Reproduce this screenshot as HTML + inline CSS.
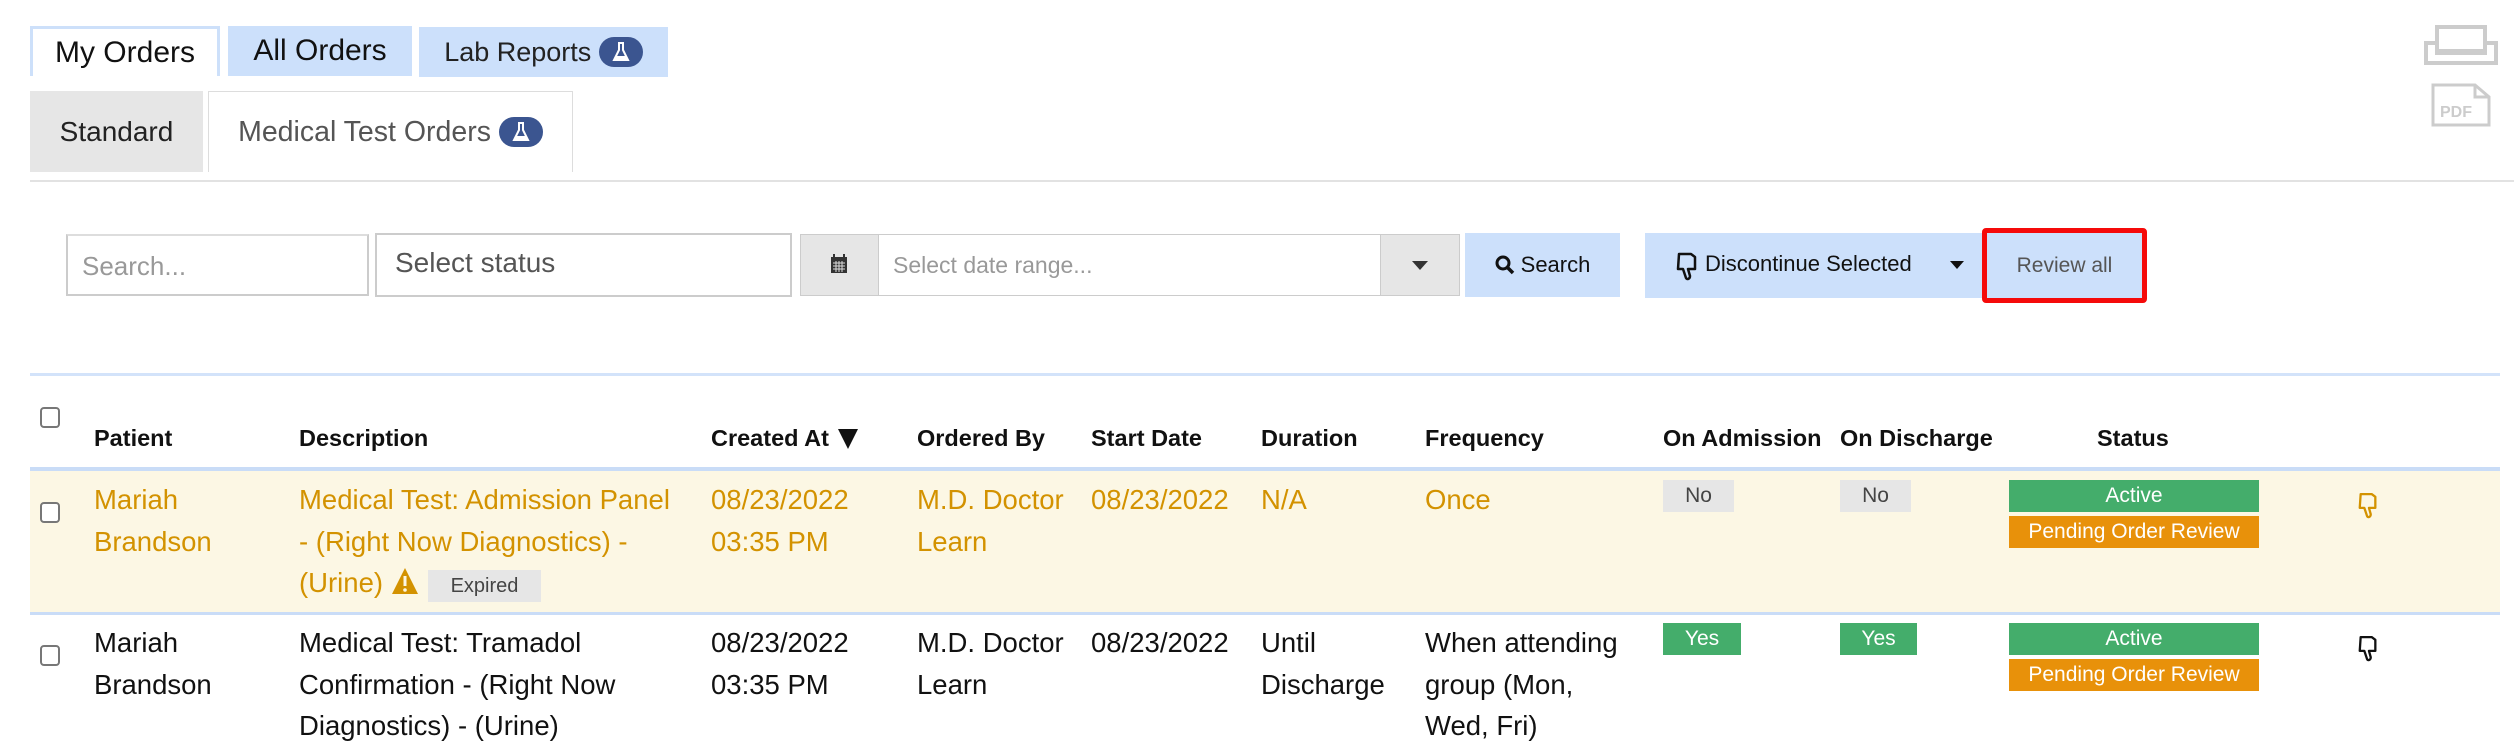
<!DOCTYPE html>
<html><head><meta charset="utf-8"><style>
*{box-sizing:border-box;margin:0;padding:0}
body{width:2514px;height:746px;background:#fff;font-family:"Liberation Sans",Arial,sans-serif;position:relative;overflow:hidden;color:#111}
.a{position:absolute}
.tab{position:absolute;display:flex;align-items:center;justify-content:center}
.badge{display:inline-block;width:44px;height:30px;border-radius:15px;background:#3b5590;vertical-align:middle;position:relative}
.badge svg{position:absolute;left:12px;top:4px}
.hd{position:absolute;top:423px;font-weight:bold;font-size:23.5px;line-height:30px;color:#111}
.c{position:absolute;font-size:27.5px;line-height:41.5px;white-space:nowrap}
.o{color:#d39200}
.cb{position:absolute;width:20px;height:21px;border:2px solid #777;border-radius:4px;background:#fff}
.lbl{position:absolute;display:flex;align-items:center;justify-content:center;font-size:21px;height:32px}
.g{background:#44ad6b;color:#fff}
.or{background:#e8910a;color:#fff}
.gr{background:#e6e6e6;color:#444}
</style></head><body>

<div class="tab" style="left:30px;top:26px;width:190px;height:50px;border:3px solid #cde0fa;border-bottom:none;font-size:30px">My Orders</div>
<div class="tab" style="left:228px;top:26px;width:184px;height:50px;background:#cce0fb;font-size:30px">All Orders</div>
<div class="tab" style="left:419px;top:27px;width:249px;height:50px;background:#cce0fb;font-size:27px;color:#222">Lab Reports&nbsp;<span class="badge"><svg width="20" height="22" viewBox="0 0 20 22"><path d="M7 2h6M8 2v7L3 19h14L12 9V2" fill="none" stroke="#fff" stroke-width="2"/><path d="M5 15h10l2 4H3z" fill="#fff"/></svg></span></div>

<div class="tab" style="left:30px;top:91px;width:173px;height:81px;background:#e6e6e6;font-size:28px;color:#222">Standard</div>
<div class="tab" style="left:208px;top:91px;width:365px;height:81px;border:1px solid #ddd;border-bottom:none;font-size:28.5px;color:#555">Medical Test Orders&nbsp;<span class="badge"><svg width="20" height="22" viewBox="0 0 20 22"><path d="M7 2h6M8 2v7L3 19h14L12 9V2" fill="none" stroke="#fff" stroke-width="2"/><path d="M5 15h10l2 4H3z" fill="#fff"/></svg></span></div>
<div class="a" style="left:30px;top:180px;width:2484px;height:2px;background:#e2e2e2"></div>

<svg class="a" style="left:2424px;top:25px" width="74" height="40" viewBox="0 0 74 40"><rect x="13" y="2" width="48" height="24" fill="none" stroke="#ccc" stroke-width="4"/><path d="M2 18h11v10h48V18h11v20H2z" fill="none" stroke="#ccc" stroke-width="4"/></svg>
<svg class="a" style="left:2431px;top:83px" width="60" height="44" viewBox="0 0 60 44"><path d="M2 2h42l14 12v28H2z M44 2v12h14" fill="none" stroke="#ccc" stroke-width="3"/><text x="9" y="34" font-family="Liberation Sans" font-weight="bold" font-size="16" fill="#ccc">PDF</text></svg>

<div class="a" style="left:66px;top:234px;width:303px;height:62px;border:2px solid #ccc;border-top-color:#ddd;font-size:26px;color:#999;padding:15px 14px">Search...</div>
<div class="a" style="left:375px;top:233px;width:417px;height:64px;border:2px solid #ccc;font-size:28px;color:#555;padding:12px 18px">Select status</div>
<div class="a" style="left:800px;top:234px;width:660px;height:62px;border:1px solid #ccc;background:#fff"></div>
<div class="a" style="left:801px;top:235px;width:78px;height:60px;background:#e6e6e6;border-right:1px solid #ccc"></div>
<svg class="a" style="left:830px;top:254px" width="18" height="20" viewBox="0 0 18 20"><rect x="1" y="3" width="16" height="16" fill="#333"/><path d="M4 0v5M14 0v5" stroke="#333" stroke-width="2"/><path d="M3 9h12M3 12h12M3 15h12M6 7v11M9 7v11M12 7v11" stroke="#ddd" stroke-width="1"/></svg>
<div class="a" style="left:893px;top:252px;font-size:23px;color:#999">Select date range...</div>
<div class="a" style="left:1380px;top:235px;width:79px;height:60px;background:#e6e6e6;border-left:1px solid #ccc"></div>
<div class="a" style="left:1412px;top:261px;border-left:8px solid transparent;border-right:8px solid transparent;border-top:9px solid #333"></div>
<div class="a" style="left:1465px;top:233px;width:155px;height:64px;background:#cce0fb;display:flex;align-items:center;justify-content:center;font-size:22px;color:#111">
<svg width="20" height="20" viewBox="0 0 20 20" style="margin-right:6px"><circle cx="8" cy="8" r="6" fill="none" stroke="#111" stroke-width="3"/><path d="M12 12l6 6" stroke="#111" stroke-width="3.5"/></svg>Search</div>

<div class="a" style="left:1645px;top:233px;width:337px;height:65px;background:#cce0fb"></div>
<svg class="a" style="left:1675px;top:252px" width="24" height="30" viewBox="0 0 24 30"><path d="M4 2h12l4 3v12h-7l2 7c0 3-3 4-4 2l-3-9H3z" fill="none" stroke="#111" stroke-width="2.5" stroke-linejoin="round"/></svg>
<div class="a" style="left:1705px;top:251px;font-size:22px;color:#111">Discontinue Selected</div>
<div class="a" style="left:1950px;top:261px;border-left:7px solid transparent;border-right:7px solid transparent;border-top:8px solid #111"></div>
<div class="a" style="left:1982px;top:228px;width:165px;height:75px;border:5px solid #f50a0a;border-radius:4px;background:#cce0fb;display:flex;align-items:center;justify-content:center;font-size:21px;color:#555">Review all</div>

<div class="a" style="left:30px;top:373px;width:2470px;height:3px;background:#d3e3fa"></div>
<div class="cb" style="left:40px;top:407px"></div>
<div class="hd" style="left:94px">Patient</div>
<div class="hd" style="left:299px">Description</div>
<div class="hd" style="left:711px">Created At</div>
<div class="a" style="left:838px;top:429px;border-left:10px solid transparent;border-right:10px solid transparent;border-top:20px solid #111"></div>
<div class="hd" style="left:917px">Ordered By</div>
<div class="hd" style="left:1091px">Start Date</div>
<div class="hd" style="left:1261px">Duration</div>
<div class="hd" style="left:1425px">Frequency</div>
<div class="hd" style="left:1663px">On Admission</div>
<div class="hd" style="left:1840px">On Discharge</div>
<div class="hd" style="left:2097px">Status</div>
<div class="a" style="left:30px;top:467px;width:2470px;height:4px;background:#c9dcf7"></div>

<div class="a" style="left:30px;top:471px;width:2470px;height:141px;background:#fcf7e4"></div>
<div class="a" style="left:30px;top:612px;width:2470px;height:3px;background:#c9dcf7"></div>

<div class="cb" style="left:40px;top:502px"></div>
<div class="c o" style="left:94px;top:479px">Mariah<br>Brandson</div>
<div class="c o" style="left:299px;top:479px">Medical Test: Admission Panel<br>- (Right Now Diagnostics) -<br>(Urine) <svg width="28" height="28" viewBox="0 0 28 28" style="vertical-align:-3px"><path d="M14 1L27 27H1z" fill="#d39200"/><path d="M14 9v10" stroke="#fcf7e4" stroke-width="3"/><circle cx="14" cy="23" r="1.8" fill="#fcf7e4"/></svg></div>
<div class="lbl gr" style="left:428px;top:570px;width:113px;font-size:20px">Expired</div>
<div class="c o" style="left:711px;top:479px">08/23/2022<br>03:35 PM</div>
<div class="c o" style="left:917px;top:479px">M.D. Doctor<br>Learn</div>
<div class="c o" style="left:1091px;top:479px">08/23/2022</div>
<div class="c o" style="left:1261px;top:479px">N/A</div>
<div class="c o" style="left:1425px;top:479px">Once</div>
<div class="lbl gr" style="left:1663px;top:480px;width:71px">No</div>
<div class="lbl gr" style="left:1840px;top:480px;width:71px">No</div>
<div class="lbl g" style="left:2009px;top:480px;width:250px">Active</div>
<div class="lbl or" style="left:2009px;top:516px;width:250px">Pending Order Review</div>
<svg class="a" style="left:2357px;top:492px" width="22" height="28" viewBox="0 0 24 30"><path d="M4 2h12l4 3v12h-7l2 7c0 3-3 4-4 2l-3-9H3z" fill="none" stroke="#d39200" stroke-width="2.5" stroke-linejoin="round"/></svg>

<div class="cb" style="left:40px;top:645px"></div>
<div class="c" style="left:94px;top:622px">Mariah<br>Brandson</div>
<div class="c" style="left:299px;top:622px">Medical Test: Tramadol<br>Confirmation - (Right Now<br>Diagnostics) - (Urine)</div>
<div class="c" style="left:711px;top:622px">08/23/2022<br>03:35 PM</div>
<div class="c" style="left:917px;top:622px">M.D. Doctor<br>Learn</div>
<div class="c" style="left:1091px;top:622px">08/23/2022</div>
<div class="c" style="left:1261px;top:622px">Until<br>Discharge</div>
<div class="c" style="left:1425px;top:622px">When attending<br>group (Mon,<br>Wed, Fri)</div>
<div class="lbl g" style="left:1663px;top:623px;width:78px">Yes</div>
<div class="lbl g" style="left:1840px;top:623px;width:77px">Yes</div>
<div class="lbl g" style="left:2009px;top:623px;width:250px">Active</div>
<div class="lbl or" style="left:2009px;top:659px;width:250px">Pending Order Review</div>
<svg class="a" style="left:2357px;top:635px" width="22" height="28" viewBox="0 0 24 30"><path d="M4 2h12l4 3v12h-7l2 7c0 3-3 4-4 2l-3-9H3z" fill="none" stroke="#111" stroke-width="2.5" stroke-linejoin="round"/></svg>
</body></html>
